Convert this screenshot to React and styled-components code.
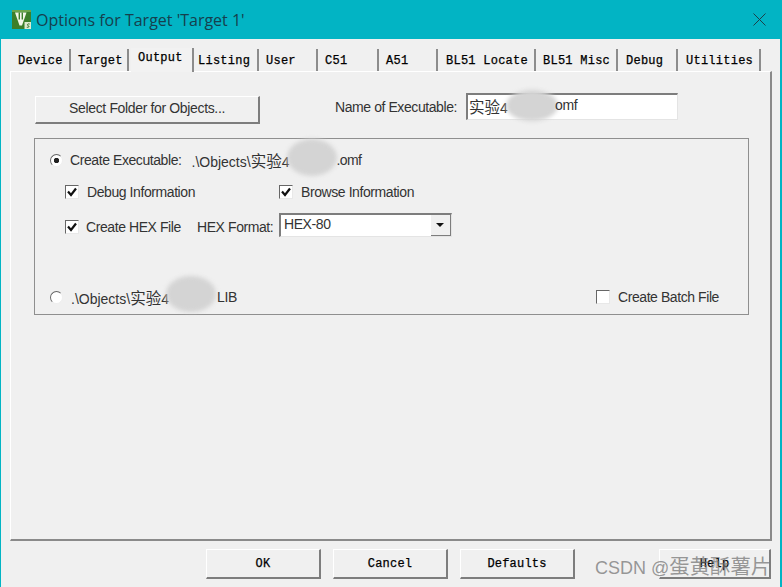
import React from 'react'
import styled, { createGlobalStyle } from 'styled-components'

const GlobalStyle = createGlobalStyle`
  html, body {
    margin: 0;
    padding: 0;
    background: #02b4c4;
  }
`

const tabs = [
  { label: 'Device', width: 57, pad: 4 },
  { label: 'Target', width: 56, pad: 5 },
  { label: 'Output', width: 63, pad: 7, active: true },
  { label: 'Listing', width: 63, pad: 2 },
  { label: 'User', width: 57, pad: 5 },
  { label: 'C51', width: 59, pad: 5 },
  { label: 'A51', width: 57, pad: 5 },
  { label: 'BL51 Locate', width: 96, pad: 6 },
  { label: 'BL51 Misc', width: 80, pad: 5 },
  { label: 'Debug', width: 58, pad: 6 },
  { label: 'Utilities', width: 81, pad: 6 }
]

const sans = `"Liberation Sans", Arial, sans-serif`
const mono = `"Liberation Mono", "Courier New", monospace`
const cjk = `"Liberation Sans", "Noto Sans CJK SC", sans-serif`

function KeilIcon() {
  return (
    <svg width="19" height="19" viewBox="0 0 19 19">
      <rect x="0" y="0" width="19" height="19" fill="#3d7f2a" />
      <rect x="0" y="0" width="19" height="2" fill="#6ca54c" />
      <rect x="12.5" y="12" width="6.5" height="7" fill="#dfeacf" />
      <path d="M3 2.5 L7.5 15.5 L10 15.5 L14.5 2.5 Z" fill="#f3f7e9" />
      <path d="M7.3 2.5 V9.5 M10.3 2.5 V9.5" stroke="#3d7f2a" strokeWidth="1.4" />
      <path d="M17.6 14 C15.4 13.4 14.8 15.2 16 15.6 C17.4 16 17.6 17.4 14.8 17.3" fill="none" stroke="#2f6d20" strokeWidth="1" />
    </svg>
  )
}

function Check() {
  return (
    <svg width="12" height="12" viewBox="0 0 12 12">
      <path d="M2 5.5 L5 9 L10 2.5" fill="none" stroke="#111" strokeWidth="2.2" />
    </svg>
  )
}

export default function App() {
  return (
    <Win>
      <GlobalStyle />
      <TitleBar>
        <KeilIcon />
        <Title>Options for Target 'Target 1'</Title>
        <Close viewBox="0 0 13 13">
          <path d="M0.5 0.5 L12.5 12.5 M12.5 0.5 L0.5 12.5" stroke="#1d3f48" strokeWidth="1" fill="none" />
        </Close>
      </TitleBar>
      <Body>
        <TabRow>
          {tabs.map(t => (
            <Tab key={t.label} $width={t.width} $pad={t.pad} $active={t.active}>{t.label}</Tab>
          ))}
        </TabRow>
        <Panel>
          <TopRow>
            <FolderButton>Select Folder for Objects...</FolderButton>
            <NameLabel>Name of Executable:</NameLabel>
            <NameInput>
              <Han>实验</Han>4<Smudge $w={52} $h={31} $left={38} $top={-5} />
              <NameExt>omf</NameExt>
            </NameInput>
          </TopRow>
          <Group>
            <RadioRow>
              <Radio $on />
              <Label>Create Executable:</Label>
              <PathText>
                .\Objects\<Han>实验</Han>4<Smudge $w={50} $h={37} $left={95} $top={-10} />
                <PathExt>.omf</PathExt>
              </PathText>
            </RadioRow>
            <CheckRow>
              <CheckCell>
                <Box><Check /></Box>
                <Label>Debug Information</Label>
              </CheckCell>
              <CheckCell>
                <Box><Check /></Box>
                <Label>Browse Information</Label>
              </CheckCell>
            </CheckRow>
            <HexRow>
              <HexCell>
                <Box><Check /></Box>
                <Label>Create HEX File</Label>
              </HexCell>
              <HexLabel>HEX Format:</HexLabel>
              <Select>
                <SelectValue>HEX-80</SelectValue>
                <SelectArrow />
              </Select>
            </HexRow>
            <LibRow>
              <Radio />
              <LibText>
                .\Objects\<Han>实验</Han>4<Smudge $w={50} $h={36} $left={95} $top={-10} />
                <LibExt>LIB</LibExt>
              </LibText>
              <BatchCell>
                <Box />
                <Label>Create Batch File</Label>
              </BatchCell>
            </LibRow>
          </Group>
        </Panel>
        <Footer>
          <FootButton>OK</FootButton>
          <FootButton>Cancel</FootButton>
          <FootButton>Defaults</FootButton>
          <HelpButton>Help</HelpButton>
        </Footer>
      </Body>
      <Watermark>CSDN @<WatermarkHan>蛋黄酥薯片</WatermarkHan></Watermark>
    </Win>
  )
}

const Win = styled.div`
  position: relative;
  width: 782px;
  height: 587px;
  overflow: hidden;
  display: flex;
  flex-direction: column;
  background: #02b4c4;
  padding: 0 2px 0 1px;
  box-sizing: border-box;
`

const TitleBar = styled.div`
  height: 39px;
  flex: none;
  display: flex;
  align-items: center;
  padding: 0 14px 0 11px;
`

const Title = styled.div`
  margin-left: 5px;
  font: 16px "Open Sans", sans-serif;
  color: #163f4d;
`

const Close = styled.svg`
  width: 13px;
  height: 13px;
  margin-left: auto;
`

const Body = styled.div`
  flex: 1;
  display: flex;
  flex-direction: column;
  background: #f0f0f0;
  padding: 0 8px 0 9px;
`

const TabRow = styled.div`
  display: flex;
  gap: 2px;
  height: 32px;
  padding-left: 4px;
  align-items: flex-end;
  position: relative;
  z-index: 1;
`

const Tab = styled.div`
  box-sizing: border-box;
  width: ${p => p.$width}px;
  height: ${p => (p.$active ? 24 : 22)}px;
  margin-bottom: ${p => (p.$active ? -1 : 0)}px;
  padding: ${p => (p.$active ? 3 : 5)}px 0 0 ${p => p.$pad}px;
  background: ${p => (p.$active ? '#f2f2f2' : '#f0f0f0')};
  border-right: 2px solid #8c8c8c;
  font: 12px ${mono};
  letter-spacing: 0.25px;
  white-space: pre;
  color: #000;
  -webkit-text-stroke: 0.25px #000;
`

const Panel = styled.div`
  box-sizing: border-box;
  height: 470px;
  flex: none;
  padding: 21px 23px 0 24px;
  border-top: 1px solid #fff;
  border-left: 1px solid #fff;
  border-right: 2px solid #8a8a8a;
  border-bottom: 2px solid #8a8a8a;
  color: #2a2a2a;
`

const TopRow = styled.div`
  display: flex;
  align-items: flex-start;
  height: 45px;
`

const FolderButton = styled.div`
  box-sizing: border-box;
  width: 225px;
  height: 28px;
  margin-top: 3px;
  padding-bottom: 3px;
  display: flex;
  align-items: center;
  justify-content: center;
  background: #f0f0f0;
  border-top: 1px solid #fff;
  border-left: 1px solid #fff;
  border-right: 2px solid #7d7d7d;
  border-bottom: 2px solid #7d7d7d;
  font: 14px ${sans};
  letter-spacing: -0.35px;
  color: #333;
`

const NameLabel = styled.div`
  margin: 6px 0 0 75px;
  width: 131px;
  font: 14px ${sans};
  letter-spacing: -0.42px;
  color: #333;
`

const NameInput = styled.div`
  position: relative;
  box-sizing: border-box;
  width: 212px;
  height: 27px;
  padding: 0 0 0 1px;
  background: #fff;
  border-top: 2px solid #7d7d7d;
  border-left: 2px solid #7d7d7d;
  border-right: 1px solid #e4e4e4;
  border-bottom: 1px solid #e4e4e4;
  font: 14px ${cjk};
  letter-spacing: -0.3px;
  color: #333;
`

const Han = styled.span`
  font-size: 15.5px;
  letter-spacing: 0;
`

const NameExt = styled.span`
  position: absolute;
  left: 87px;
  top: 2px;
`

const Smudge = styled.span`
  position: absolute;
  left: ${p => p.$left}px;
  top: ${p => p.$top}px;
  width: ${p => p.$w}px;
  height: ${p => p.$h}px;
  border-radius: 50%;
  background: #d4d4d4;
  filter: blur(2px);
`

const Group = styled.div`
  box-sizing: border-box;
  width: 715px;
  height: 177px;
  margin-left: -1px;
  border: 1px solid #8f8f8f;
  display: flex;
  flex-direction: column;
  padding: 0 0 0 15px;
`

const Label = styled.span`
  font: 14px ${sans};
  letter-spacing: -0.42px;
  color: #333;
  white-space: nowrap;
`

const RadioRow = styled.div`
  display: flex;
  align-items: center;
  height: 20px;
  margin-top: 11px;
`

const Radio = styled.span`
  box-sizing: border-box;
  flex: none;
  width: 13px;
  height: 13px;
  margin-right: 7px;
  border-radius: 50%;
  background: ${p => (p.$on
    ? 'radial-gradient(circle, #222 0 2.4px, #fff 3px)'
    : '#fff')};
  border: 1px solid;
  border-color: #666 #eee #eee #666;
`

const PathText = styled.span`
  position: relative;
  margin-left: 10px;
  font: 14px ${cjk};
  color: #333;
`

const PathExt = styled.span`
  position: absolute;
  left: 145px;
  top: 3px;
  letter-spacing: -0.6px;
`

const CheckRow = styled.div`
  display: grid;
  grid-template-columns: 214px auto;
  height: 20px;
  margin-top: 12px;
  padding-left: 15px;
`

const CheckCell = styled.div`
  display: flex;
  align-items: center;
  gap: 8px;
`

const Box = styled.span`
  box-sizing: border-box;
  flex: none;
  width: 14px;
  height: 14px;
  display: flex;
  align-items: center;
  justify-content: center;
  background: #fff;
  border: 1px solid;
  border-color: #666 #e8e8e8 #e8e8e8 #666;
`

const HexRow = styled.div`
  display: flex;
  align-items: center;
  height: 24px;
  margin-top: 13px;
  padding-left: 15px;
`

const HexCell = styled(CheckCell)`
  gap: 7px;
  width: 132px;
`

const HexLabel = styled(Label)`
  width: 82px;
`

const Select = styled.div`
  box-sizing: border-box;
  width: 173px;
  height: 24px;
  margin-top: -4px;
  display: flex;
  background: #fff;
  border-top: 2px solid #7d7d7d;
  border-left: 2px solid #7d7d7d;
  border-right: 1px solid #e4e4e4;
  border-bottom: 1px solid #e4e4e4;
`

const SelectValue = styled.div`
  flex: 1;
  padding: 1px 0 0 3px;
  font: 14px ${sans};
  letter-spacing: -0.42px;
  color: #333;
`

const SelectArrow = styled.div`
  position: relative;
  width: 20px;
  background: #f0f0f0;
  border-right: 1px solid #7d7d7d;
  border-bottom: 1px solid #7d7d7d;
  box-sizing: border-box;
  &::after {
    content: '';
    position: absolute;
    left: 5px;
    top: 8px;
    border-left: 4px solid transparent;
    border-right: 4px solid transparent;
    border-top: 4px solid #111;
  }
`

const LibRow = styled.div`
  display: flex;
  align-items: center;
  height: 20px;
  margin-top: 48px;
`

const LibText = styled.span`
  position: relative;
  margin-left: 1px;
  font: 14px ${cjk};
  color: #333;
`

const LibExt = styled.span`
  position: absolute;
  left: 146px;
  top: 3px;
  letter-spacing: -0.3px;
`

const BatchCell = styled(CheckCell)`
  margin-left: auto;
  margin-right: 29px;
`

const Footer = styled.div`
  flex: 1;
  display: flex;
  align-items: flex-start;
  gap: 12px;
  padding: 8px 0 0 196px;
`

const FootButton = styled.div`
  box-sizing: border-box;
  width: 115px;
  height: 30px;
  display: flex;
  align-items: center;
  justify-content: center;
  background: #f0f0f0;
  border-top: 1px solid #fff;
  border-left: 1px solid #fff;
  border-right: 2px solid #7d7d7d;
  border-bottom: 2px solid #7d7d7d;
  font: 12px ${mono};
  letter-spacing: 0.2px;
  color: #000;
  -webkit-text-stroke: 0.25px #000;
`

const HelpButton = styled(FootButton)`
  width: 112px;
  margin-left: 72px;
`

const Watermark = styled.div`
  position: absolute;
  left: 595px;
  top: 550px;
  font: 18px ${cjk};
  color: rgba(110, 110, 110, 0.7);
  white-space: nowrap;
`

const WatermarkHan = styled.span`
  font-size: 20.4px;
`
